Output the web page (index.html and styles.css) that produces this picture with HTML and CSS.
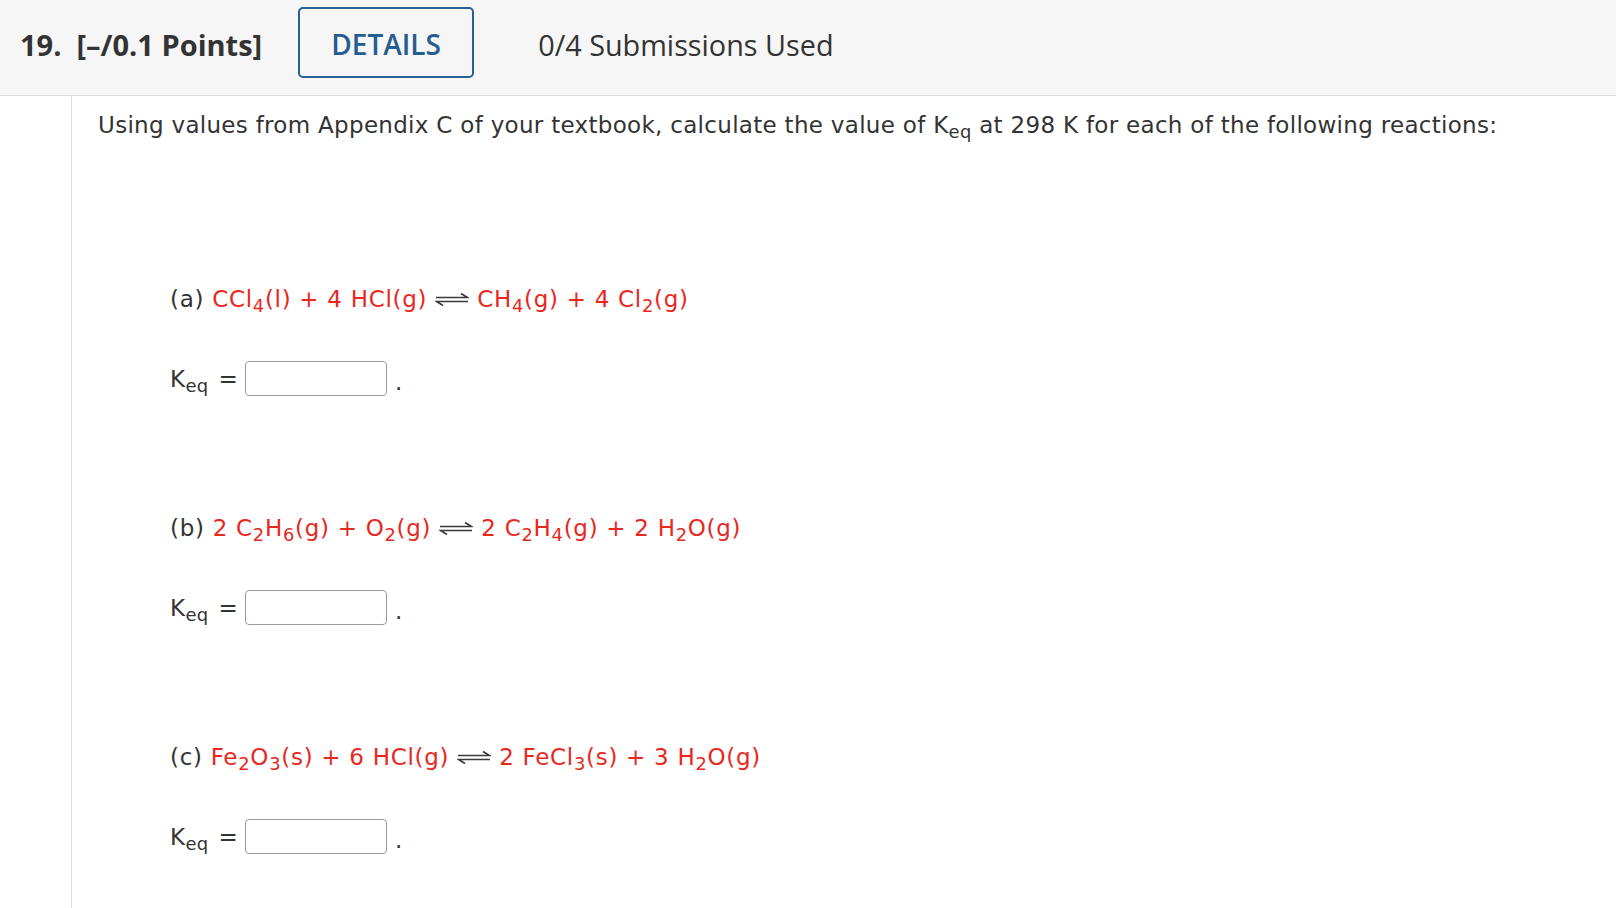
FILE: index.html
```html
<!DOCTYPE html>
<html lang="en">
<head>
<meta charset="utf-8">
<title>Question 19</title>
<link rel="stylesheet" href="styles.css">
</head>
<body>
<div class="header">
  <span class="qnum">19.</span>
  <span class="points">[–/0.1 Points]</span>
  <button class="details" type="button">DETAILS</button>
  <span class="subs">0/4 Submissions Used</span>
</div>
<div class="main">
  <div class="gutter"></div>
  <div class="content">
    <p class="intro">Using values from Appendix C of your textbook, calculate the value of K<sub class="ksub">eq</sub> at 298 K for each of the following reactions:</p>

    <div class="part">
      <p class="eq">(a) <span class="red">CCl<sub>4</sub>(l) + 4 HCl(g) <svg class="arrow" viewBox="0 0 34 14" width="34" height="14" aria-hidden="true"><path d="M1 5.5H32.5L26 1.5" /><path d="M33 9.5H1.5L8 13.5" /></svg> CH<sub>4</sub>(g) + 4 Cl<sub>2</sub>(g)</span></p>
      <div class="answer"><span class="k">K<sub class="ksub">eq</sub></span><span class="eqsign">=</span><input class="box" type="text" aria-label="Keq a"><span class="dot">.</span></div>
    </div>

    <div class="part">
      <p class="eq">(b) <span class="red">2 C<sub>2</sub>H<sub>6</sub>(g) + O<sub>2</sub>(g) <svg class="arrow" viewBox="0 0 34 14" width="34" height="14" aria-hidden="true"><path d="M1 5.5H32.5L26 1.5" /><path d="M33 9.5H1.5L8 13.5" /></svg> 2 C<sub>2</sub>H<sub>4</sub>(g) + 2 H<sub>2</sub>O(g)</span></p>
      <div class="answer"><span class="k">K<sub class="ksub">eq</sub></span><span class="eqsign">=</span><input class="box" type="text" aria-label="Keq b"><span class="dot">.</span></div>
    </div>

    <div class="part">
      <p class="eq">(c) <span class="red">Fe<sub>2</sub>O<sub>3</sub>(s) + 6 HCl(g) <svg class="arrow" viewBox="0 0 34 14" width="34" height="14" aria-hidden="true"><path d="M1 5.5H32.5L26 1.5" /><path d="M33 9.5H1.5L8 13.5" /></svg> 2 FeCl<sub>3</sub>(s) + 3 H<sub>2</sub>O(g)</span></p>
      <div class="answer"><span class="k">K<sub class="ksub">eq</sub></span><span class="eqsign">=</span><input class="box" type="text" aria-label="Keq c"><span class="dot">.</span></div>
    </div>
  </div>
</div>
</body>
</html>
```

FILE: styles.css
```css
html, body {
  margin: 0;
  padding: 0;
  background: #ffffff;
}

body {
  font-family: "DejaVu Sans", Verdana, sans-serif;
  color: #333333;
  height: 908px;
  overflow: hidden;
  display: flex;
  flex-direction: column;
}

.header {
  display: flex;
  align-items: center;
  height: 89px;
  padding: 0 0 6px 20px;
  background: #f6f6f6;
  border-bottom: 1px solid #dddddd;
  font-family: "Open Sans", sans-serif;
  font-size: 29px;
  color: #333333;
}

.qnum {
  font-weight: 700;
}

.points {
  font-weight: 700;
  margin-left: 15px;
}

.details {
  align-self: flex-start;
  margin-top: 7px;
  margin-left: 36px;
  width: 176px;
  height: 71px;
  border: 2px solid #2a5f95;
  border-radius: 5px;
  background: #f6f6f6;
  color: #255c92;
  font-family: "Open Sans", sans-serif;
  font-size: 28px;
  font-weight: 600;
  padding: 4px 0 0 0;
  line-height: 63px;
}

.subs {
  margin-left: 64px;
  font-size: 28.8px;
}

.main {
  flex: 1;
  display: flex;
}

.gutter {
  width: 71px;
  border-right: 1px solid #dddddd;
}

.content {
  padding: 0 0 0 26px;
  font-size: 23px;
  letter-spacing: 0.3px;
}

p {
  margin: 0;
}

.intro {
  margin-top: 14px;
  line-height: 30px;
}

sub {
  font-size: 0.78em;
  vertical-align: -0.3em;
  line-height: 0;
}

.part {
  padding-left: 72px;
  margin-top: 144px;
}

.part + .part {
  margin-top: 117px;
}

.eq {
  line-height: 30px;
  letter-spacing: 0.7px;
}

.red {
  color: #e8281e;
}

.arrow {
  vertical-align: 1px;
  fill: none;
  stroke: #3a3a3a;
  stroke-width: 1.7;
  stroke-linejoin: miter;
  stroke-linecap: butt;
}

.answer {
  display: flex;
  align-items: center;
  height: 35px;
  margin-top: 47px;
}

.k {
  line-height: 30px;
}

.eqsign {
  margin-left: 10px;
}

.box {
  width: 142px;
  height: 35px;
  box-sizing: border-box;
  margin: 0 0 0 7px;
  border: 1px solid #9a9a9a;
  border-radius: 4px;
  background: #ffffff;
  font-size: 18px;
}

.dot {
  margin-left: 8px;
  position: relative;
  top: 3px;
}
```
